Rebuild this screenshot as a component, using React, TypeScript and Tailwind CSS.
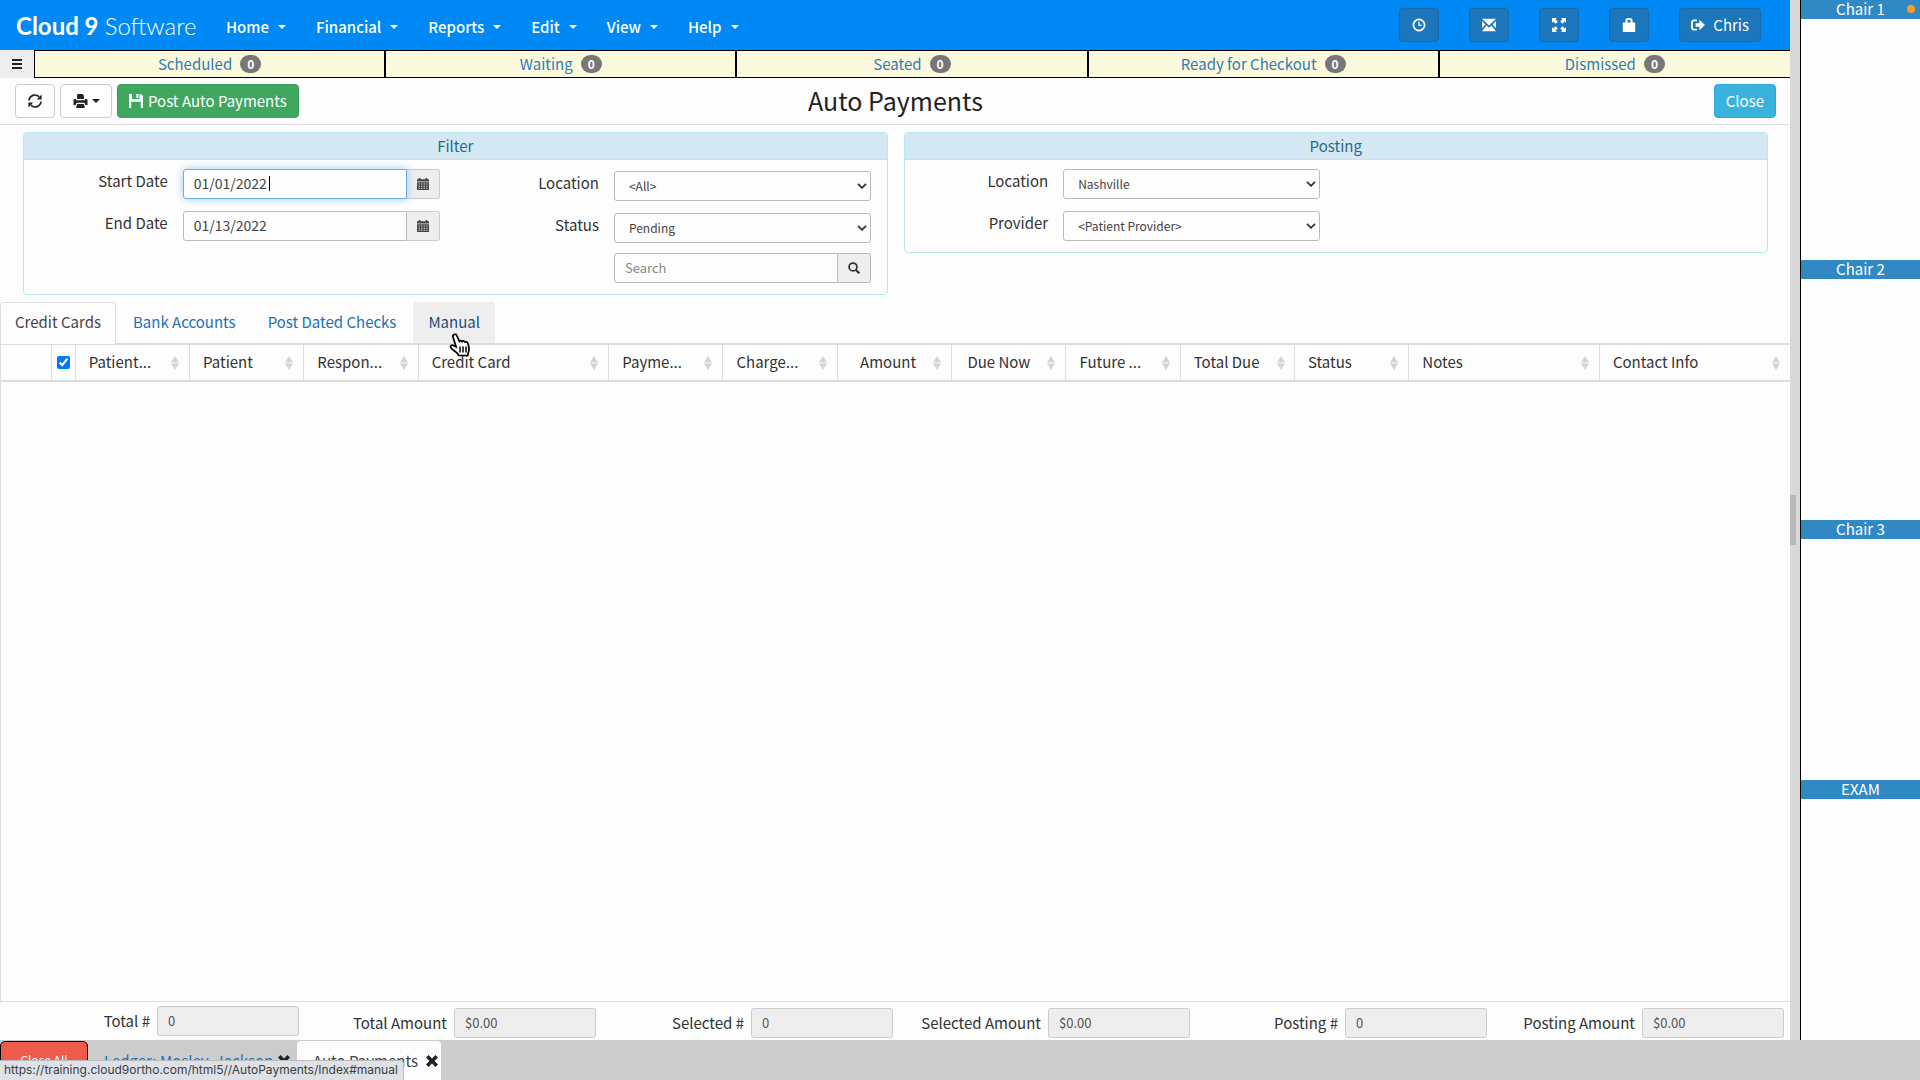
import * as React from 'react'
import clsx from 'clsx'

const menus = ['Home', 'Financial', 'Reports', 'Edit', 'View', 'Help']

const statuses = ['Scheduled', 'Waiting', 'Seated', 'Ready for Checkout', 'Dismissed']

const chairs = ['Chair 1', 'Chair 2', 'Chair 3', 'EXAM']

const columns = [
  {title: 'Patient...', width: 'w-[114px]'},
  {title: 'Patient', width: 'w-[114px]'},
  {title: 'Respon...', width: 'w-[114px]'},
  {title: 'Credit Card', width: 'w-[190px]'},
  {title: 'Payme...', width: 'w-[114px]'},
  {title: 'Charge...', width: 'w-[114px]'},
  {title: 'Amount', width: 'w-[114px]', right: true},
  {title: 'Due Now', width: 'w-[114px]', right: true},
  {title: 'Future ...', width: 'w-[114px]'},
  {title: 'Total Due', width: 'w-[114px]', right: true},
  {title: 'Status', width: 'w-[114px]'},
  {title: 'Notes', width: 'w-[190px]'},
  {title: 'Contact Info', width: 'w-[190px]'},
]

const totals = [
  {label: 'Total #', value: '0'},
  {label: 'Total Amount', value: '$0.00'},
  {label: 'Selected #', value: '0'},
  {label: 'Selected Amount', value: '$0.00'},
  {label: 'Posting #', value: '0'},
  {label: 'Posting Amount', value: '$0.00'},
]

const Icon: React.FC<{className?: string; children: React.ReactNode}> = ({
  className = 'size-3.5',
  children,
}) => (
  <svg viewBox="0 0 14 14" className={clsx('shrink-0', className)} fill="currentColor" aria-hidden>
    {children}
  </svg>
)

const ClockIcon = () => (
  <Icon>
    <circle cx="7" cy="7" r="5.6" fill="none" stroke="currentColor" strokeWidth="1.7" />
    <path d="M7 3.6V7.4H9.6" fill="none" stroke="currentColor" strokeWidth="1.2" />
  </Icon>
)

const MailIcon = () => (
  <Icon className="h-3.5 w-4">
    <path d="M0 .8h14L7 7.4z" />
    <path d="M0 3l3.4 3.6L0 10.2zM14 3l-3.4 3.6L14 10.2z" />
    <path d="M0 13.2L4.6 7.4 7 9.8 9.4 7.4 14 13.2z" />
  </Icon>
)

const FullscreenIcon = () => (
  <Icon>
    <path d="M0 0h5L3.6 1.4 5.8 3.6 3.6 5.8 1.4 3.6 0 5zM14 0v5l-1.4-1.4-2.2 2.2-2.2-2.2 2.2-2.2L9 0zM0 14V9l1.4 1.4 2.2-2.2 2.2 2.2-2.2 2.2L5 14zM14 14H9l1.4-1.4-2.2-2.2 2.2-2.2 2.2 2.2L14 9z" />
  </Icon>
)

const LockIcon = () => (
  <Icon>
    <path d="M.8 5.2a.8.8 0 0 1 .8-.8h1.8V3a3 3 0 0 1 3-3h1.2a3 3 0 0 1 3 3v1.4h1.8a.8.8 0 0 1 .8.8v8a.8.8 0 0 1-.8.8H1.6a.8.8 0 0 1-.8-.8zM5.4 4.4h3.2V3a1.2 1.2 0 0 0-1.2-1.2h-.8A1.2 1.2 0 0 0 5.4 3z" />
  </Icon>
)

const LogoutIcon = () => (
  <Icon>
    <path d="M6 2.4H3a2 2 0 0 0-2 2v5.200a2 2 0 0 0 2 2h3" fill="none" stroke="currentColor" strokeWidth="1.8" />
    <path d="M4.6 5.2h3.8V1.8L14 7l-5.600 5.200V8.800H4.600z" />
  </Icon>
)

const RefreshIcon = () => (
  <Icon>
    <path d="M1 6.500A6 6 0 0 1 11.200 2.800M13 7.500A6 6 0 0 1 2.800 11.200" fill="none" stroke="currentColor" strokeWidth="1.7" />
    <path d="M13.600.600v5H8.800zM.400 13.400v-5h4.800z" />
  </Icon>
)

const PrintIcon = () => (
  <Icon className="h-3.5 w-[15px]">
    <path d="M4 0h5l1.400 1.600V5H3.600V1.200zM1.200 5h1.400v1.200h8.800V5h1.400A1.200 1.200 0 0 1 14 6.200V11h-2.200L11 8.800H3L2.200 11H0V6.200A1.200 1.200 0 0 1 1.200 5zM3.600 10h6.800l1 4H2.600z" />
  </Icon>
)

const SaveIcon = () => (
  <Icon>
    <path d="M0 0h3v5h7.500V0H12l2 2v12h-2.200V7.800H2.200V14H0zM7.400 0h2v4h-2z" />
  </Icon>
)

const CalendarIcon = () => (
  <Icon className="size-3">
    <path
      fillRule="evenodd"
      d="M0 1.500h2V0h2v1.500h6V0h2v1.500h2V4H0zM0 5h14v9H0zM1.800 6.400v1.200h1.500V6.400zm3 0v1.200h1.500V6.400zm3 0v1.200h1.500V6.400zm3 0v1.200h1.500V6.400zM1.800 8.900v1.200h1.500V8.900zm3 0v1.200h1.500V8.900zm3 0v1.200h1.500V8.900zm3 0v1.200h1.500V8.900zM1.800 11.400v1.200h1.500v-1.200zm3 0v1.200h1.500v-1.200zm3 0v1.200h1.500v-1.200zm3 0v1.200h1.500v-1.200z"
    />
  </Icon>
)

const SearchIcon = () => (
  <Icon className="size-3">
    <circle cx="5.8" cy="5.8" r="4.6" fill="none" stroke="currentColor" strokeWidth="2" />
    <path d="M9 9l4.200 4.200" stroke="currentColor" strokeWidth="2.6" />
  </Icon>
)

const RemoveIcon = () => (
  <Icon className="size-3">
    <path d="M3 0l4 4 4-4 3 3-4 4 4 4-3 3-4-4-4 4-3-3 4-4-4-4z" />
  </Icon>
)

const SortIcon = () => (
  <svg viewBox="0 0 8 14" className="h-3.5 w-2 shrink-0 text-[#d4d4d4]" fill="currentColor" aria-hidden>
    <path d="M4 0l4 6.500H0zM0 7.500h8L4 14z" />
  </svg>
)

const Caret = () => (
  <svg viewBox="0 0 8 4" className="h-1 w-2 shrink-0" fill="currentColor" aria-hidden>
    <path d="M0 0h8L4 4z" />
  </svg>
)

const HandCursor = () => (
  <svg viewBox="0 0 22 24" className="absolute top-[31px] left-9 z-10 h-6 w-[22px]" aria-hidden>
    <path
      d="M5 1.600c1-.6 2.300-.2 2.800 1l2.600 5.800c.7-1 2.200-1 2.800.2.800-1 2.300-.8 2.900.4 1-.6 2.400 0 2.700 1.300.8 2.400 2 5.200.9 8.200-.5 1.400-.9 2.200-.9 4H9.600c-.5-2.200-2.800-3.700-4.800-5-1.400-1-2.500-2-3.200-3.200-.7-1.300.8-2.700 2.300-2.100l3.200 1.700L4 4c-.4-.9 0-1.900 1-2.400z"
      fill="#fff"
      stroke="#000"
      strokeWidth="1.7"
    />
    <path d="M11 13.500v6M14 13.500v6M17 13.500v6" stroke="#000" strokeWidth="1.5" />
  </svg>
)

const NavButton: React.FC<{label: string; children: React.ReactNode}> = ({label, children}) => (
  <button
    aria-label={label}
    className="flex h-[34px] min-w-10 items-center justify-center gap-2 rounded border border-[#1a69a8] bg-[#1c76bc] px-[11px] text-[15px] text-white"
  >
    {children}
  </button>
)

const Navbar = () => (
  <nav className="flex h-[50px] items-center justify-between bg-[#0088f4] pr-[29px] pl-4 text-white">
    <div className="flex items-center">
      <a href="#" className="w-[180px] pt-0.5 font-[Lato,sans-serif] text-[24px] leading-12 whitespace-nowrap">
        <b className="font-bold">Cloud 9</b> <span className="font-light">Software</span>
      </a>
      <ul className="flex pt-1 pl-[15px]">
        {menus.map((menu) => (
          <li key={menu}>
            <button className="flex items-center gap-[9px] px-[15px] text-[15px] leading-5 font-medium">
              {menu} <Caret />
            </button>
          </li>
        ))}
      </ul>
    </div>
    <div className="flex gap-[30px]">
      <NavButton label="Time clock">
        <ClockIcon />
      </NavButton>
      <NavButton label="Messages">
        <MailIcon />
      </NavButton>
      <NavButton label="Full screen">
        <FullscreenIcon />
      </NavButton>
      <NavButton label="Lock">
        <LockIcon />
      </NavButton>
      <NavButton label="Log out">
        <LogoutIcon />
        Chris
      </NavButton>
    </div>
  </nav>
)

const StatusBar = () => (
  <div className="flex h-7">
    <button aria-label="Toggle list" className="flex w-[34px] shrink-0 items-center justify-center bg-[#eee]">
      <svg viewBox="0 0 10 10" className="size-2.5" fill="#222" aria-hidden>
        <path d="M0 0h10v2H0zM0 4h10v2H0zM0 8h10v2H0z" />
      </svg>
    </button>
    <div className="grid flex-1 grid-cols-5">
      {statuses.map((status) => (
        <a
          key={status}
          href="#"
          className="flex items-center justify-center gap-2 border border-black bg-[#fcfadc] text-[15px] leading-5 text-[#337ab7] last:border-r-0"
        >
          {status}
          <span className="h-[18px] rounded-full bg-[#777] px-[7px] text-[12px] leading-[17px] font-bold text-white">
            0
          </span>
        </a>
      ))}
    </div>
  </div>
)

const Toolbar = () => (
  <header className="grid h-[47px] grid-cols-3 items-center border-b border-[#ddd] pr-3.5 pl-[15px]">
    <div className="flex gap-[5px]">
      <button
        aria-label="Refresh"
        className="flex h-[34px] w-10 items-center justify-center rounded border border-[#ccc] bg-white text-[#222]"
      >
        <RefreshIcon />
      </button>
      <button
        aria-label="Print"
        className="flex h-[34px] w-[52px] items-center justify-center gap-1 rounded border border-[#ccc] bg-white text-[#222]"
      >
        <PrintIcon />
        <Caret />
      </button>
      <button className="flex h-[34px] items-center gap-[5px] rounded border border-[#38a05a] bg-[#3fa75f] px-[11px] text-[15px] text-white">
        <SaveIcon />
        Post Auto Payments
      </button>
    </div>
    <h1 className="pb-0.5 text-center text-[25px] leading-8 text-[#222]">Auto Payments</h1>
    <div className="flex justify-end">
      <button className="h-[34px] rounded border border-[#28a9da] bg-[#39b3de] px-[11px] text-[15px] text-white">
        Close
      </button>
    </div>
  </header>
)

const Field: React.FC<{id: string; label?: string; children: React.ReactNode}> = ({
  id,
  label,
  children,
}) => (
  <div className="flex h-[30px]">
    <label htmlFor={id} className="w-[36.8%] pr-[15px] text-right text-[15px] leading-6 text-[#333]">
      {label}
    </label>
    <div className="flex w-[257px]">{children}</div>
  </div>
)

const Select: React.FC<{id: string; options: string[]}> = ({id, options}) => (
  <div className="relative flex-1">
    <select
      id={id}
      className="h-[30px] w-full appearance-none rounded-[3px] border border-[#bbb] bg-[#fdfdfd] pl-3.5 text-[12px] text-[#444]"
    >
      {options.map((option) => (
        <option key={option}>{option}</option>
      ))}
    </select>
    <svg
      viewBox="0 0 10 6"
      className="pointer-events-none absolute top-3 right-1 h-1.5 w-2.5"
      fill="none"
      stroke="#333"
      strokeWidth="1.8"
      aria-hidden
    >
      <path d="M1 .8l4 4 4-4" />
    </svg>
  </div>
)

const DateInput: React.FC<{id: string; value: string; active?: boolean}> = ({id, value, active}) => (
  <>
    <div className="relative flex-1">
      <input
        id={id}
        defaultValue={value}
        className={clsx(
          'h-[30px] w-full rounded-l-[3px] border px-2.5 pb-0.5 text-[14px] text-[#444] outline-none',
          active ? 'border-[#66afe9] shadow-[0_0_8px_rgba(102,175,233,0.6)]' : 'border-[#bbb]',
        )}
      />
      {active && <span className="absolute top-[7px] left-[86px] h-[15px] w-px bg-black" />}
    </div>
    <button
      aria-label="Open calendar"
      className="flex w-[33px] items-center justify-center rounded-r-[3px] border border-l-0 border-[#ccc] bg-[#eee] text-[#444]"
    >
      <CalendarIcon />
    </button>
  </>
)

const Panel: React.FC<{title: string; children: React.ReactNode}> = ({title, children}) => (
  <section className="rounded border border-[#bce8f1]">
    <h2 className="h-[27px] rounded-t-[3px] border-b border-[#bce8f1] bg-[#d3e8f3] text-center text-[15px] leading-[26px] text-[#2c6787]">
      {title}
    </h2>
    <div className="grid grid-cols-2">{children}</div>
  </section>
)

const Filters = () => (
  <div className="grid grid-cols-2 items-start gap-4 pt-[7px] pr-[22px] pl-[23px]">
    <Panel title="Filter">
      <div className="flex flex-col gap-3 pt-[9px]">
        <Field id="start" label="Start Date">
          <DateInput id="start" value="01/01/2022" active />
        </Field>
        <Field id="end" label="End Date">
          <DateInput id="end" value="01/13/2022" />
        </Field>
      </div>
      <div className="flex flex-col pt-[11px] pb-[11px]">
        <Field id="filter-location" label="Location">
          <Select id="filter-location" options={['<All>']} />
        </Field>
        <div className="pt-3 pb-2.5">
          <Field id="status" label="Status">
            <Select id="status" options={['Pending']} />
          </Field>
        </div>
        <Field id="search">
          <input
            id="search"
            aria-label="Search"
            placeholder="Search"
            className="h-[30px] w-full min-w-0 flex-1 rounded-l-[3px] border border-[#bbb] px-2.5 pb-0.5 text-[13px] placeholder:text-[#888]"
          />
          <button
            aria-label="Run search"
            className="flex w-[33px] items-center justify-center rounded-r-[3px] border border-l-0 border-[#bbb] bg-[#eee] text-[#333]"
          >
            <SearchIcon />
          </button>
        </Field>
      </div>
    </Panel>
    <Panel title="Posting">
      <div className="flex flex-col gap-3 pt-[9px] pb-[11px]">
        <Field id="posting-location" label="Location">
          <Select id="posting-location" options={['Nashville']} />
        </Field>
        <Field id="provider" label="Provider">
          <Select id="provider" options={['<Patient Provider>']} />
        </Field>
      </div>
    </Panel>
  </div>
)

const Tabs = () => (
  <div className="mt-[7px] flex h-[42px] gap-0.5 border-b border-[#ddd] text-[15px] leading-10 text-[#1f70b5]">
    <a href="#cards" className="h-[42px] rounded-t border border-b-0 border-[#ddd] bg-[#fdfdfd] px-3.5 leading-[38px] text-[#444]">
      Credit Cards
    </a>
    <a href="#bank" className="px-[15px]">
      Bank Accounts
    </a>
    <a href="#checks" className="px-[15px]">
      Post Dated Checks
    </a>
    <a href="#manual" className="relative rounded-t bg-[#eee] px-[15px] text-[#1c4f80]">
      Manual
      <HandCursor />
    </a>
  </div>
)

const Grid = () => (
  <div className="flex-1 border border-r-0 border-[#ddd]">
    <table className="w-full table-fixed border-collapse text-[15px] leading-5 text-[#333]">
      <thead>
        <tr className="h-9 border-b-2 border-[#ddd]">
          <th className="w-[50px] border-r border-[#ddd]" aria-label="Details" />
          <th className="w-6 border-r border-[#ddd]">
            <input type="checkbox" aria-label="Select all" defaultChecked className="mx-auto block size-[13px] accent-[#0075ff]" />
          </th>
          {columns.map((column, i) => (
            <th key={i} className={clsx('border-r border-[#ddd] pr-2.5 pl-[13px] font-normal last:border-r-0', column.width)}>
              <div className="flex items-center gap-2">
                <span
                  className={clsx('flex-1 pb-0.5 whitespace-nowrap', column.right ? 'pr-[9px] text-right' : 'text-left')}
                >
                  {column.title}
                </span>
                <SortIcon />
              </div>
            </th>
          ))}
        </tr>
      </thead>
      <tbody />
    </table>
  </div>
)

const Totals = () => (
  <div className="grid h-[38px] grid-cols-6 pr-1.5 pl-0.5">
    {totals.map(({label, value}) => (
      <label
        key={label}
        className="flex items-center justify-end gap-[7px] pt-1 text-[15px] leading-5 text-[#333] first:pt-0"
      >
        {label}
        <input
          readOnly
          value={value}
          className="h-[30px] w-[142px] rounded-[3px] border border-[#ccc] bg-[#eee] px-2.5 pb-0.5 text-[13px] text-[#555]"
        />
      </label>
    ))}
  </div>
)

const Chairs = () => (
  <aside className="flex w-[120px] flex-col border-l border-black">
    {chairs.map((chair, i) => (
      <div key={chair} className={clsx('shrink-0', i < 3 && 'h-[260px]')}>
        <h3 className="relative h-[19px] bg-[#3189c3] text-center text-[15px] leading-[18px] text-white">
          {chair}
          {i === 0 && <span className="absolute top-[5px] right-[5px] size-2 rounded-full bg-[#ff9a2e]" />}
        </h3>
      </div>
    ))}
  </aside>
)

const Taskbar = () => (
  <footer className="flex h-10 overflow-hidden bg-[#ccc] pt-px text-[15px]">
    <button className="h-11 w-[88px] shrink-0 rounded-[5px] border border-black bg-[#ef5b4c] pb-1.5 text-[12px] text-white">
      Close All
    </button>
    <div className="flex h-11 w-[209px] shrink-0 items-center justify-between pr-[7px] pb-1 pl-4 text-[#1f70b5]">
      <a href="#ledger">Ledger: Mosley, Jackson</a>
      <button aria-label="Close ledger" className="text-[#222]">
        <RemoveIcon />
      </button>
    </div>
    <div className="flex h-11 w-36 shrink-0 items-center justify-between rounded-t bg-[#fdfdfd] pr-[3px] pb-1 pl-4 text-[#444]">
      <a href="#auto">Auto Payments</a>
      <button aria-label="Close auto payments" className="text-[#222]">
        <RemoveIcon />
      </button>
    </div>
  </footer>
)

export default function App() {
  return (
    <div className="flex min-h-screen flex-col bg-[#fdfdfd] font-['Noto_Sans_CJK_JP','Noto_Sans',sans-serif]">
      <div className="flex flex-1">
        <main className="flex min-w-0 flex-1 flex-col">
          <Navbar />
          <StatusBar />
          <Toolbar />
          <Filters />
          <Tabs />
          <Grid />
          <Totals />
        </main>
        <div className="flex w-2.5 items-center bg-[#d9d9d9]">
          <div className="h-[50px] w-1.5 bg-[#b9b9b9]" />
        </div>
        <Chairs />
      </div>
      <Taskbar />
      <div className="fixed bottom-0 left-0 h-5 rounded-tr border-t border-r border-[#bbb] bg-[#dee1e6] pr-[5px] pl-1 font-[Inter,sans-serif] text-[12px] leading-[18px] text-[#3c4043]">
        https://training.cloud9ortho.com/html5//AutoPayments/Index#manual
      </div>
    </div>
  )
}
